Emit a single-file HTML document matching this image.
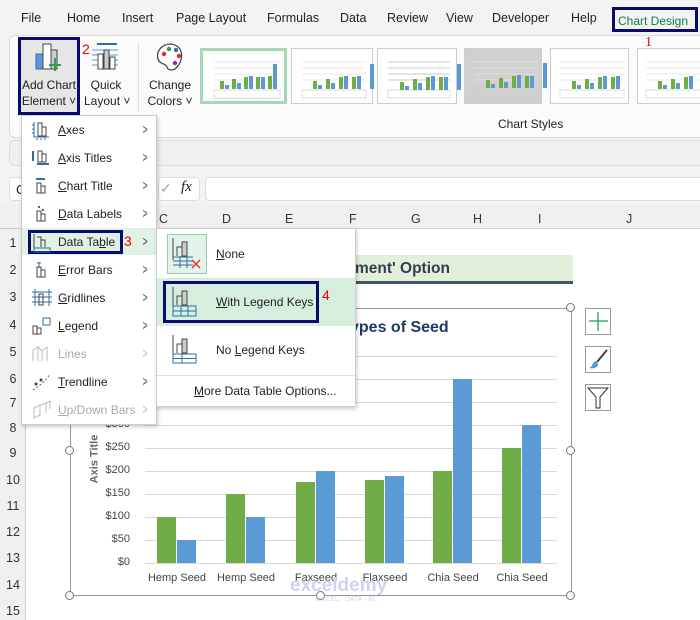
<!DOCTYPE html>
<html><head><style>
*{margin:0;padding:0;box-sizing:border-box}
body{width:700px;height:620px;overflow:hidden;background:#f3f3f3;font-family:"Liberation Sans",sans-serif;font-size:13px;color:#222;position:relative}
.a{position:absolute;white-space:nowrap}
.tab{position:absolute;top:11px;font-size:12.5px;color:#222}
.mi{position:absolute;left:58px;font-size:12px;color:#222}
.chev{position:absolute;left:141px;font-size:14px;color:#444;transform:scaleX(.6)}
.rh{position:absolute;left:0;width:26px;text-align:center;font-size:12.5px;color:#333}
.ch{position:absolute;top:212px;font-size:12.5px;color:#333}
.grid{position:absolute;left:145px;width:412px;height:1px;background:#d9d9d9}
.yl{position:absolute;font-size:11px;color:#444;text-align:right;width:40px}
.xl{position:absolute;top:572px;font-size:11px;color:#444;width:80px;text-align:center}
.g{position:absolute;background:#70ad47;width:19px}
.b{position:absolute;background:#5b9bd5;width:19px}
.hd{position:absolute;width:9px;height:9px;border:1.5px solid #777;border-radius:50%;background:#fff}
.thumb{position:absolute;top:48px;height:56px;border:1px solid #ccc;background:#fff}
</style></head><body>
<div class="tab" style="left:21px">File</div>
<div class="tab" style="left:67px">Home</div>
<div class="tab" style="left:122px">Insert</div>
<div class="tab" style="left:176px">Page Layout</div>
<div class="tab" style="left:267px">Formulas</div>
<div class="tab" style="left:340px">Data</div>
<div class="tab" style="left:387px">Review</div>
<div class="tab" style="left:446px">View</div>
<div class="tab" style="left:492px">Developer</div>
<div class="tab" style="left:571px">Help</div>
<div class="a" style="left:612px;top:7px;width:86px;height:25px;border:3px solid #0b0b6e;color:#107c41;font-size:12px;padding:4px 0 0 3px">Chart Design</div>
<div class="a" style="left:9px;top:35px;width:700px;height:103px;background:#fbfbfb;border:1px solid #ddd;border-radius:6px"></div>
<div class="a" style="left:645px;top:35px;color:#e00;font-family:'Liberation Serif';font-size:14px">1</div>
<div class="a" style="left:18px;top:37px;width:62px;height:78px;border:3px solid #0b0b6e;background:#e6e6e6"></div>
<svg class="a" style="left:33px;top:42px" width="30" height="30"><rect x="3" y="12" width="7" height="15" fill="#5b9bd5" stroke="#2f6ca8"/><rect x="10" y="2" width="8" height="25" fill="#fff" stroke="#444"/><rect x="18" y="8" width="6" height="19" fill="#ccc" stroke="#444"/><path d="M22 16v13M16 23h12" stroke="#2e9e4a" stroke-width="2"/></svg>
<div class="a" style="left:21px;top:77px;font-size:12px;line-height:16px;text-align:center;width:56px">Add Chart<br>Element ˅</div>
<div class="a" style="left:82px;top:41px;color:#e00;font-size:14px">2</div>
<svg class="a" style="left:90px;top:42px" width="30" height="30"><path d="M7 2h20" stroke="#2f6ca8" stroke-width="2"/><path d="M2 8h26M2 13h26M2 18h26M2 23h26" stroke="#5b9bd5"/><rect x="8" y="12" width="5" height="15" fill="#fff" stroke="#444"/><rect x="14" y="8" width="5" height="19" fill="#ccc" stroke="#444"/><rect x="20" y="15" width="5" height="12" fill="#fff" stroke="#444"/></svg>
<div class="a" style="left:84px;top:77px;font-size:12px;line-height:16px;text-align:center;width:44px">Quick<br>Layout ˅</div>
<div class="a" style="left:138px;top:42px;width:1px;height:70px;background:#ddd"></div>
<svg class="a" style="left:155px;top:42px" width="32" height="30"><path d="M16 2C6 2 1 10 3 17c2 6 8 4 9 8s7 4 10 0c6-6 8-21-6-23z" fill="#fff" stroke="#444" stroke-width="1.3"/><circle cx="9" cy="12" r="2.2" fill="#e23"/><circle cx="14" cy="7" r="2.2" fill="#2a9d4a"/><circle cx="21" cy="8" r="2.2" fill="#2f6ca8"/><circle cx="24" cy="14" r="2.2" fill="#e23"/><circle cx="20" cy="21" r="2.2" fill="#8a2ab0"/></svg>
<div class="a" style="left:147px;top:77px;font-size:12px;line-height:16px;text-align:center;width:46px">Change<br>Colors ˅</div>
<div class="thumb" style="left:200px;width:87px;background:#fff;border:3px solid #a6d8b5"></div>
<div class="thumb" style="left:291px;width:82px"></div>
<div class="thumb" style="left:377px;width:80px"></div>
<div class="thumb" style="left:464px;width:78px;background:#d0d0d0"></div>
<div class="thumb" style="left:550px;width:79px"></div>
<div class="thumb" style="left:637px;width:70px"></div>
<svg class="a" style="left:200px;top:48px" width="500" height="56" stroke="#e4e4e4">
<g stroke-width="0.7"><path d="M14 14h66M14 20h66M14 26h66M14 32h66M14 38h66"/><path d="M102 14h64M102 20h64M102 26h64M102 32h64"/><path d="M188 14h62M188 20h62M188 26h62M188 32h62" stroke="#bbb"/><path d="M274 14h64M274 20h64M274 26h64M274 32h64"/><path d="M360 14h64M360 20h64M360 26h64M360 32h64"/><path d="M446 14h60M446 20h60M446 26h60M446 32h60"/>
<path d="M14 42h66v8H14zM102 42h64v8h-64zM188 42h62v8h-62zM274 42h64v8h-64zM360 42h64v8h-64zM446 42h60v8h-60z" fill="none" stroke="#ccc"/></g>
<g stroke="none" fill="#70ad47"><rect x="20" y="33" width="4" height="8"/><rect x="32" y="31" width="4" height="10"/><rect x="44" y="29" width="4" height="12"/><rect x="56" y="29" width="4" height="12"/><rect x="68" y="28" width="4" height="13"/>
<rect x="113" y="33" width="4" height="8"/><rect x="126" y="31" width="4" height="10"/><rect x="139" y="29" width="4" height="12"/><rect x="152" y="29" width="4" height="12"/>
<rect x="200" y="34" width="4" height="8"/><rect x="213" y="31" width="4" height="11"/><rect x="226" y="29" width="4" height="13"/><rect x="239" y="29" width="4" height="13"/>
<rect x="286" y="32" width="4" height="8"/><rect x="299" y="30" width="4" height="10"/><rect x="312" y="28" width="4" height="12"/><rect x="325" y="28" width="4" height="12"/>
<rect x="372" y="33" width="4" height="8"/><rect x="385" y="31" width="4" height="10"/><rect x="398" y="29" width="4" height="12"/><rect x="411" y="29" width="4" height="12"/>
<rect x="458" y="33" width="4" height="8"/><rect x="471" y="31" width="4" height="10"/><rect x="484" y="29" width="4" height="12"/></g>
<g stroke="none" fill="#5b9bd5"><rect x="25" y="37" width="4" height="4"/><rect x="37" y="35" width="4" height="6"/><rect x="49" y="28" width="4" height="13"/><rect x="61" y="29" width="4" height="12"/><rect x="73" y="16" width="4" height="25"/>
<rect x="118" y="37" width="4" height="4"/><rect x="131" y="35" width="4" height="6"/><rect x="144" y="28" width="4" height="13"/><rect x="157" y="28" width="4" height="13"/><rect x="170" y="16" width="4" height="25"/>
<rect x="205" y="38" width="4" height="4"/><rect x="218" y="35" width="4" height="7"/><rect x="231" y="28" width="4" height="14"/><rect x="244" y="29" width="4" height="13"/><rect x="257" y="16" width="4" height="26"/>
<rect x="291" y="36" width="4" height="4"/><rect x="304" y="34" width="4" height="6"/><rect x="317" y="27" width="4" height="13"/><rect x="330" y="28" width="4" height="12"/><rect x="343" y="15" width="4" height="25"/>
<rect x="377" y="37" width="4" height="4"/><rect x="390" y="35" width="4" height="6"/><rect x="403" y="28" width="4" height="13"/><rect x="416" y="28" width="4" height="13"/>
<rect x="463" y="37" width="4" height="4"/><rect x="476" y="35" width="4" height="6"/><rect x="489" y="28" width="4" height="13"/></g>
</svg>
<div class="a" style="left:498px;top:117px;font-size:12px">Chart Styles</div>
<div class="a" style="left:9px;top:140px;width:700px;height:26px;background:#f0f0f0;border:1px solid #ddd;border-radius:6px"></div>
<div class="a" style="left:9px;top:177px;width:60px;height:24px;background:#fff;border:1px solid #ddd;border-radius:4px;padding:4px 6px">C</div>
<div class="a" style="left:158px;top:177px;width:42px;height:24px;background:#fff;border:1px solid #ddd;border-radius:4px"></div>
<div class="a" style="left:160px;top:180px;color:#aaa;font-size:14px">✓</div>
<div class="a" style="left:181px;top:179px;font-family:'Liberation Serif';font-style:italic;font-size:15px">fx</div>
<div class="a" style="left:205px;top:177px;width:500px;height:24px;background:#fff;border:1px solid #ddd;border-radius:4px"></div>
<div class="a" style="left:0;top:205px;width:700px;height:24px;background:#f0f0f0;border-bottom:1px solid #ccc"></div>
<div class="a" style="left:26px;top:229px;width:674px;height:391px;background:#fff"></div>
<div class="a" style="left:0;top:229px;width:26px;height:391px;background:#f0f0f0;border-right:1px solid #ccc"></div>
<div class="ch" style="left:159px">C</div><div class="ch" style="left:222px">D</div><div class="ch" style="left:285px">E</div><div class="ch" style="left:349px">F</div><div class="ch" style="left:411px">G</div><div class="ch" style="left:473px">H</div><div class="ch" style="left:538px">I</div><div class="ch" style="left:626px">J</div>
<div class="rh" style="top:236px">1</div><div class="rh" style="top:263px">2</div><div class="rh" style="top:290px">3</div><div class="rh" style="top:318px">4</div><div class="rh" style="top:345px">5</div><div class="rh" style="top:372px">6</div><div class="rh" style="top:396px">7</div><div class="rh" style="top:421px">8</div><div class="rh" style="top:446px">9</div><div class="rh" style="top:473px">10</div><div class="rh" style="top:499px">11</div><div class="rh" style="top:525px">12</div><div class="rh" style="top:551px">13</div><div class="rh" style="top:578px">14</div><div class="rh" style="top:604px">15</div>
<div class="a" style="left:300px;top:255px;width:273px;height:29px;background:#e2efda;border-bottom:3px solid #44546a"></div>
<div class="a" style="left:355px;top:260px;font-weight:bold;font-size:15.5px;color:#333f50">ment' Option</div>
<div class="a" style="left:70px;top:308px;width:502px;height:288px;border:1px solid #999;background:#fff"></div>
<div class="a" style="left:350px;top:319px;font-weight:bold;font-size:16px;color:#1f3864">ypes of Seed</div>
<div class="grid" style="top:356px"></div><div class="grid" style="top:379px"></div><div class="grid" style="top:402px"></div>
<div class="grid" style="top:425px"></div><div class="grid" style="top:448px"></div><div class="grid" style="top:471px"></div><div class="grid" style="top:494px"></div><div class="grid" style="top:517px"></div><div class="grid" style="top:540px"></div><div class="grid" style="top:563px"></div>
<div class="yl" style="top:418px;left:90px">$300</div><div class="yl" style="top:441px;left:90px">$250</div><div class="yl" style="top:464px;left:90px">$200</div><div class="yl" style="top:487px;left:90px">$150</div><div class="yl" style="top:510px;left:90px">$100</div><div class="yl" style="top:533px;left:90px">$50</div><div class="yl" style="top:556px;left:90px">$0</div>
<div class="a" style="left:70px;top:453px;transform:rotate(-90deg);font-size:11px;font-weight:bold;color:#666">Axis Title</div>
<div class="g" style="left:157px;top:517px;height:46px"></div><div class="b" style="left:177px;top:540px;height:23px"></div>
<div class="g" style="left:226px;top:494px;height:69px"></div><div class="b" style="left:246px;top:517px;height:46px"></div>
<div class="g" style="left:296px;top:482px;height:81px"></div><div class="b" style="left:316px;top:471px;height:92px"></div>
<div class="g" style="left:365px;top:480px;height:83px"></div><div class="b" style="left:385px;top:476px;height:87px"></div>
<div class="g" style="left:433px;top:471px;height:92px"></div><div class="b" style="left:453px;top:379px;height:184px"></div>
<div class="g" style="left:502px;top:448px;height:115px"></div><div class="b" style="left:522px;top:425px;height:138px"></div>
<div class="xl" style="left:137px">Hemp Seed</div><div class="xl" style="left:206px">Hemp Seed</div><div class="xl" style="left:276px">Faxseed</div><div class="xl" style="left:345px">Flaxseed</div><div class="xl" style="left:413px">Chia Seed</div><div class="xl" style="left:482px">Chia Seed</div>
<div class="a" style="left:290px;top:575px;font-size:19px;font-weight:bold;color:#c9d6f0">exceldemy</div>
<div class="a" style="left:316px;top:596px;font-size:7px;color:#c9d6f0">EXCEL · DATA · BI</div>
<div class="hd" style="left:566px;top:303px"></div><div class="hd" style="left:65px;top:446px"></div><div class="hd" style="left:566px;top:446px"></div>
<div class="hd" style="left:65px;top:591px"></div><div class="hd" style="left:316px;top:591px"></div><div class="hd" style="left:566px;top:591px"></div>
<div class="a" style="left:585px;top:308px;width:26px;height:27px;border:1px solid #999;background:#fff"><svg width="24" height="25"><path d="M12 3v19M3 12h19" stroke="#2a9d4a" stroke-width="1.3"/></svg></div>
<div class="a" style="left:585px;top:346px;width:26px;height:27px;border:1px solid #999;background:#fff"><svg width="24" height="25"><path d="M21 3L11 15" stroke="#444" stroke-width="2"/><path d="M10 14c-4 1-3 6-7 7 4 1 9 0 9-4z" fill="#5b9bd5"/></svg></div>
<div class="a" style="left:585px;top:384px;width:26px;height:27px;border:1px solid #999;background:#fff"><svg width="24" height="25"><path d="M2 3h20l-8 9v11h-4V12z" fill="#fff" stroke="#333"/></svg></div>
<div class="a" style="left:21px;top:115px;width:136px;height:310px;background:#fff;border:1px solid #ccc;box-shadow:1px 2px 4px rgba(0,0,0,.2)"></div>
<div class="a" style="left:22px;top:228px;width:134px;height:27px;background:#e0f1e6"></div>
<div class="a" style="left:28px;top:230px;width:95px;height:24px;border:3px solid #0b0b6e"></div>
<div class="a" style="left:124px;top:233px;color:#e00;font-size:14px">3</div>
<svg class="a" style="left:31px;top:120px" width="22" height="300" fill="none" stroke="#444">
<g><rect x="7" y="3" width="4" height="13"/><rect x="11" y="7" width="4" height="9"/><path d="M3 2v15h15M1 5h2M1 9h2M1 13h2M6 18v2M10 18v2M14 18v2" stroke="#2f6ca8"/></g>
<g transform="translate(0,28)"><rect x="7" y="3" width="4" height="11"/><rect x="11" y="6" width="4" height="8"/><path d="M2 3v10M6 16h12" stroke="#2f6ca8" stroke-width="2"/></g>
<g transform="translate(0,56)"><rect x="6" y="7" width="4" height="10"/><rect x="10" y="10" width="4" height="7"/><path d="M5 3h9" stroke="#2f6ca8" stroke-width="2"/></g>
<g transform="translate(0,84)"><rect x="6" y="7" width="4" height="10"/><rect x="10" y="10" width="4" height="7"/><path d="M7 3h2M11 6h2" stroke="#2f6ca8" stroke-width="2"/></g>
<g transform="translate(0,112)"><path d="M3 2v15M6 5h4v10M10 8h4v7"/><path d="M3 16h16v4H3z" stroke="#2f6ca8"/></g>
<g transform="translate(0,140)"><rect x="6" y="7" width="4" height="10"/><rect x="10" y="10" width="4" height="7"/><path d="M8 2v6M6 3h4" stroke="#2f6ca8"/></g>
<g transform="translate(0,168)" stroke="#2f6ca8"><path d="M1 4h20M1 9h20M1 14h20M4 1v17M18 1v17"/><rect x="8" y="6" width="4" height="11" stroke="#444"/></g>
<g transform="translate(0,196)"><rect x="2" y="10" width="4" height="8"/><rect x="6" y="12" width="4" height="6"/><rect x="12" y="2" width="7" height="7" stroke="#2f6ca8"/></g>
<g transform="translate(0,224)" stroke="#bbb"><path d="M2 17V6l5-3 4 4 5-4v14M7 3v14M11 7v10"/></g>
<g transform="translate(0,252)" stroke="#2f6ca8"><path d="M2 18C8 14 14 10 19 2" stroke-dasharray="2 2"/><circle cx="5" cy="12" r="1" fill="#444" stroke="#444"/><circle cx="10" cy="8" r="1" fill="#444" stroke="#444"/></g>
<g transform="translate(0,280)" stroke="#bbb"><path d="M3 8v10l6-3V5zM9 5l6-2v10M15 3l4 -2v8"/></g>
</svg>
<div class="mi" style="top:123px"><u>A</u>xes</div><div class="chev" style="top:121px">&gt;</div>
<div class="mi" style="top:151px"><u>A</u>xis Titles</div><div class="chev" style="top:149px">&gt;</div>
<div class="mi" style="top:179px"><u>C</u>hart Title</div><div class="chev" style="top:177px">&gt;</div>
<div class="mi" style="top:207px"><u>D</u>ata Labels</div><div class="chev" style="top:205px">&gt;</div>
<div class="mi" style="top:235px">Data Ta<u>b</u>le</div><div class="chev" style="top:233px">&gt;</div>
<div class="mi" style="top:263px"><u>E</u>rror Bars</div><div class="chev" style="top:261px">&gt;</div>
<div class="mi" style="top:291px"><u>G</u>ridlines</div><div class="chev" style="top:289px">&gt;</div>
<div class="mi" style="top:319px"><u>L</u>egend</div><div class="chev" style="top:317px">&gt;</div>
<div class="mi" style="top:347px;color:#aaa">Lines</div><div class="chev" style="top:345px;color:#bbb">&gt;</div>
<div class="mi" style="top:375px"><u>T</u>rendline</div><div class="chev" style="top:373px">&gt;</div>
<div class="mi" style="top:403px;color:#aaa"><u>U</u>p/Down Bars</div><div class="chev" style="top:401px;color:#bbb">&gt;</div>
<div class="a" style="left:156px;top:228px;width:200px;height:179px;background:#fff;border:1px solid #ccc;box-shadow:1px 2px 4px rgba(0,0,0,.2)"></div>
<div class="a" style="left:167px;top:234px;width:40px;height:40px;border:1px solid #8fcfa4;background:#e4f3ea"></div>
<div class="a" style="left:157px;top:278px;width:198px;height:48px;background:#d5eedd"></div>
<div class="a" style="left:163px;top:281px;width:156px;height:42px;border:3px solid #0b0b6e"></div>
<div class="a" style="left:322px;top:287px;color:#e00;font-size:14px">4</div>
<svg class="a" style="left:170px;top:236px" width="40" height="130" fill="none">
<g><path d="M3 2v22M7 20v-9h5v9" stroke="#444"/><rect x="12" y="6" width="5" height="14" fill="#ccc" stroke="#444"/><path d="M3 21h20M3 25h20M3 29h20M10 20v12M17 20v12" stroke="#2f6ca8"/><path d="M22 24l8 8M30 24l-8 8" stroke="#e33" stroke-width="1.5"/></g>
<g transform="translate(0,49)"><path d="M3 2v22M7 20v-9h5v9" stroke="#444"/><rect x="12" y="6" width="5" height="14" fill="#ccc" stroke="#444"/><path d="M3 21h23v10H3zM3 26h23M11 21v10M18 21v10" stroke="#2f6ca8"/></g>
<g transform="translate(0,97)"><path d="M3 2v22M7 20v-9h5v9" stroke="#444"/><rect x="12" y="6" width="5" height="14" fill="#ccc" stroke="#444"/><path d="M3 21h23v9H3zM3 25.5h23M12 21v9" stroke="#2f6ca8"/></g>
</svg>
<div class="a" style="left:216px;top:247px;font-size:12px"><u>N</u>one</div>
<div class="a" style="left:216px;top:295px;font-size:12px"><u>W</u>ith Legend Keys</div>
<div class="a" style="left:216px;top:343px;font-size:12px">No <u>L</u>egend Keys</div>
<div class="a" style="left:157px;top:375px;width:198px;height:1px;background:#ddd"></div>
<div class="a" style="left:194px;top:384px;font-size:12px"><u>M</u>ore Data Table Options...</div>
</body></html>
